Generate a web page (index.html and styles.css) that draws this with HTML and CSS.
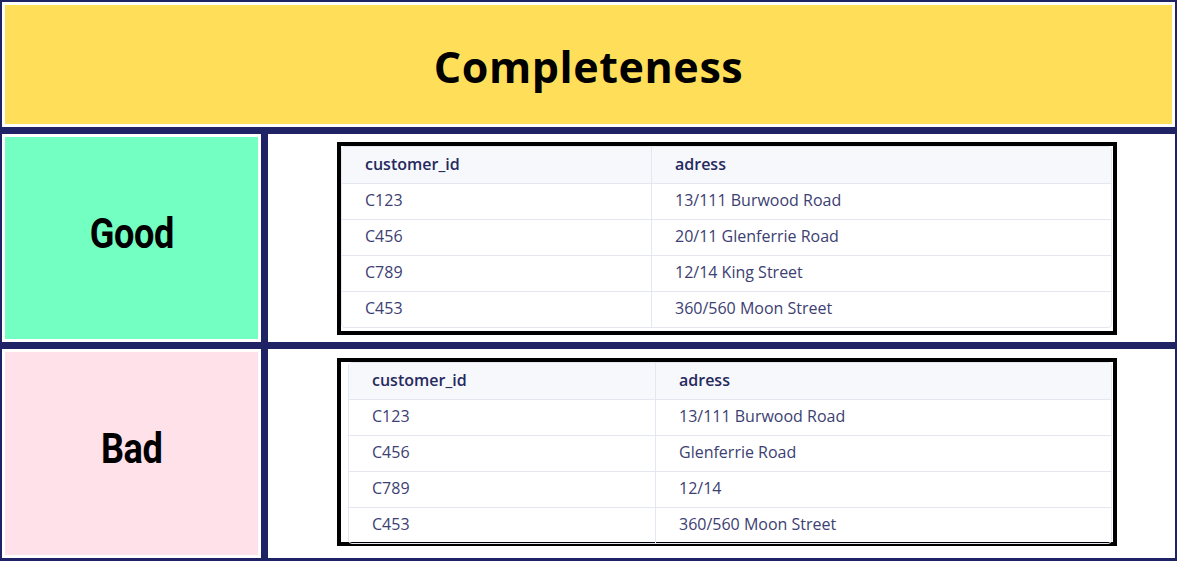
FILE: index.html
```html
<!DOCTYPE html>
<html>
<head>
<meta charset="utf-8">
<link rel="stylesheet" href="styles.css">
</head>
<body>
<div class="board">
  <div class="cell title-cell"><div class="fill fill-yellow"><h1 class="title">Completeness</h1></div></div>
  <div class="cell label-cell"><div class="fill fill-green"><span class="label">Good</span></div></div>
  <div class="cell table-cell good-cell">
    <div class="frame frame-good">
      <table class="data">
        <colgroup><col class="c1-good"><col></colgroup>
        <thead><tr><th>customer_id</th><th>adress</th></tr></thead>
        <tbody>
          <tr><td>C123</td><td>13/111 Burwood Road</td></tr>
          <tr><td>C456</td><td>20/11 Glenferrie Road</td></tr>
          <tr><td>C789</td><td>12/14 King Street</td></tr>
          <tr><td>C453</td><td>360/560 Moon Street</td></tr>
        </tbody>
      </table>
    </div>
  </div>
  <div class="cell label-cell"><div class="fill fill-pink"><span class="label">Bad</span></div></div>
  <div class="cell table-cell bad-cell">
    <div class="frame frame-bad">
      <table class="data">
        <colgroup><col class="c1-bad"><col></colgroup>
        <thead><tr><th>customer_id</th><th>adress</th></tr></thead>
        <tbody>
          <tr><td>C123</td><td>13/111 Burwood Road</td></tr>
          <tr><td>C456</td><td>Glenferrie Road</td></tr>
          <tr><td>C789</td><td>12/14</td></tr>
          <tr><td>C453</td><td>360/560 Moon Street</td></tr>
        </tbody>
      </table>
    </div>
  </div>
</div>
</body>
</html>
```
FILE: styles.css
```css
html, body { margin: 0; padding: 0; }
body { background: #1f2366; width: 1177px; height: 561px; overflow: hidden; }
.board {
  display: grid;
  grid-template-columns: 259px 907px;
  grid-template-rows: 125px 208px 209px;
  gap: 7px;
  padding: 2px 2px 3px 2px;
}
.cell { background: #ffffff; box-sizing: border-box; }
.title-cell { grid-column: 1 / 3; padding: 3px; }
.label-cell { padding: 3px; }
.fill { width: 100%; height: 100%; display: flex; align-items: center; justify-content: center; }
.fill-yellow { background: #ffde59; }
.fill-green { background: #72ffc1; }
.fill-pink { background: #ffe1ea; }
.title {
  margin: 4px 0 0 0;
  font-family: "Open Sans", sans-serif;
  font-weight: 700;
  font-size: 43px;
  color: #000;
  letter-spacing: 0.6px;
}
.label {
  display: inline-block;
  font-family: "Roboto", sans-serif;
  font-weight: 700;
  font-size: 42px;
  color: #000;
  margin-bottom: 10px;
  letter-spacing: -0.5px;
  transform: scaleX(0.86);
}
.good-cell { padding: 8px 58px 0 69px; }
.bad-cell { padding: 9px 58px 0 69px; }
.frame { border: 4px solid #000; box-sizing: border-box; background: #fff; }
.frame-good { height: 193px; padding: 0 1px 3px 0; }
.frame-bad { height: 188px; padding: 0 1px 1px 7px; }
.data {
  width: 100%;
  border-collapse: separate;
  border-spacing: 0;
  border: 1px solid #e4e7ef;
  border-radius: 4px;
  font-family: "Open Sans", sans-serif;
  font-size: 16px;
  font-weight: 500;
  color: #3c4072;
}
.c1-good { width: 309px; }
.c1-bad { width: 306px; }
.data th, .data td {
  text-align: left;
  padding: 0 24px 3px 23px;
  height: 32px;
  border-bottom: 1px solid #e4e7ef;
}
.data th + th, .data td + td { border-left: 1px solid #e4e7ef; }
.data th { background: #f7f8fc; font-weight: 600; color: #262a5c; height: 33px; }
.data tbody tr:last-child td { border-bottom: none; }
```
